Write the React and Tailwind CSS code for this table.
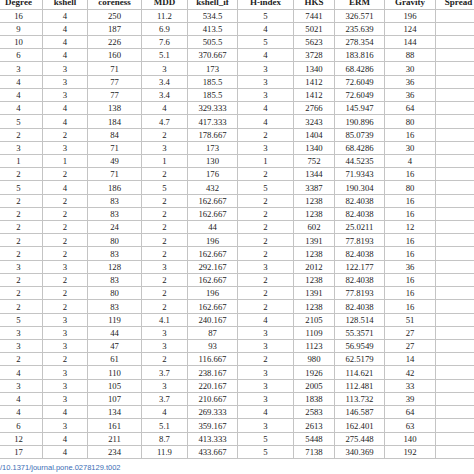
import React from "react";

const header = ["Degree", "kshell", "coreness", "MDD", "kshell_if", "H-index", "HKS", "ERM", "Gravity", "Spread"];

const rows = [
  ["16", "4", "250", "11.2", "534.5", "5", "7441", "326.571", "196"],
  ["9", "4", "187", "6.9", "413.5", "4", "5021", "235.639", "124"],
  ["10", "4", "226", "7.6", "505.5", "5", "5623", "278.354", "144"],
  ["6", "4", "160", "5.1", "370.667", "4", "3728", "183.816", "88"],
  ["3", "3", "71", "3", "173", "3", "1340", "68.4286", "30"],
  ["4", "3", "77", "3.4", "185.5", "3", "1412", "72.6049", "36"],
  ["4", "3", "77", "3.4", "185.5", "3", "1412", "72.6049", "36"],
  ["4", "4", "138", "4", "329.333", "4", "2766", "145.947", "64"],
  ["5", "4", "184", "4.7", "417.333", "4", "3243", "190.896", "80"],
  ["2", "2", "84", "2", "178.667", "2", "1404", "85.0739", "16"],
  ["3", "3", "71", "3", "173", "3", "1340", "68.4286", "30"],
  ["1", "1", "49", "1", "130", "1", "752", "44.5235", "4"],
  ["2", "2", "71", "2", "176", "2", "1344", "71.9343", "16"],
  ["5", "4", "186", "5", "432", "5", "3387", "190.304", "80"],
  ["2", "2", "83", "2", "162.667", "2", "1238", "82.4038", "16"],
  ["2", "2", "83", "2", "162.667", "2", "1238", "82.4038", "16"],
  ["2", "2", "24", "2", "44", "2", "602", "25.0211", "12"],
  ["2", "2", "80", "2", "196", "2", "1391", "77.8193", "16"],
  ["2", "2", "83", "2", "162.667", "2", "1238", "82.4038", "16"],
  ["3", "3", "128", "3", "292.167", "3", "2012", "122.177", "36"],
  ["2", "2", "83", "2", "162.667", "2", "1238", "82.4038", "16"],
  ["2", "2", "80", "2", "196", "2", "1391", "77.8193", "16"],
  ["2", "2", "83", "2", "162.667", "2", "1238", "82.4038", "16"],
  ["5", "3", "119", "4.1", "240.167", "4", "2105", "128.514", "51"],
  ["3", "3", "44", "3", "87", "3", "1109", "55.3571", "27"],
  ["3", "3", "47", "3", "93", "3", "1123", "56.9549", "27"],
  ["2", "2", "61", "2", "116.667", "2", "980", "62.5179", "14"],
  ["4", "3", "110", "3.7", "238.167", "3", "1926", "114.621", "42"],
  ["3", "3", "105", "3", "220.167", "3", "2005", "112.481", "33"],
  ["4", "3", "107", "3.7", "210.667", "3", "1838", "113.732", "39"],
  ["4", "4", "134", "4", "269.333", "4", "2583", "146.587", "64"],
  ["6", "3", "161", "5.1", "359.167", "3", "2613", "162.401", "63"],
  ["12", "4", "211", "8.7", "413.333", "5", "5448", "275.448", "140"],
  ["17", "4", "234", "11.9", "433.667", "5", "7138", "340.369", "192"],
];

export default function App() {
  return (
    <div className="w-[474px] h-[474px] overflow-hidden bg-white" style={{ fontFamily: '"Liberation Serif", "DejaVu Serif", serif' }}>
      <div className="ml-[-5px] mt-[-3.7px] grid grid-cols-[48px_45px_54px_46px_50px_56px_41px_50px_51px_46px] w-[487px]">
        {header.map((h, i) => (
          <div key={"h" + i} className="h-[13.22px] flex items-center justify-center border-b border-r border-[#c4c4c4] text-[9px] font-bold text-[#1c1c1c] leading-none pt-[1px]">
            {h}
          </div>
        ))}
        {rows.map((r, ri) =>
          [...r, ""].map((c, ci) => (
            <div key={ri + "-" + ci} className="h-[13.22px] flex items-center justify-center border-b border-r border-[#c4c4c4] text-[8.7px] text-[#222] leading-none pt-[1px]">
              {c}
            </div>
          ))
        )}
      </div>
      <div className="mt-[4px] text-[7.5px] leading-[10px] text-[#3b6db5]" style={{ fontFamily: '"Liberation Sans", Arial, sans-serif' }}>
        /10.1371/journal.pone.0278129.t002
      </div>
    </div>
  );
}
